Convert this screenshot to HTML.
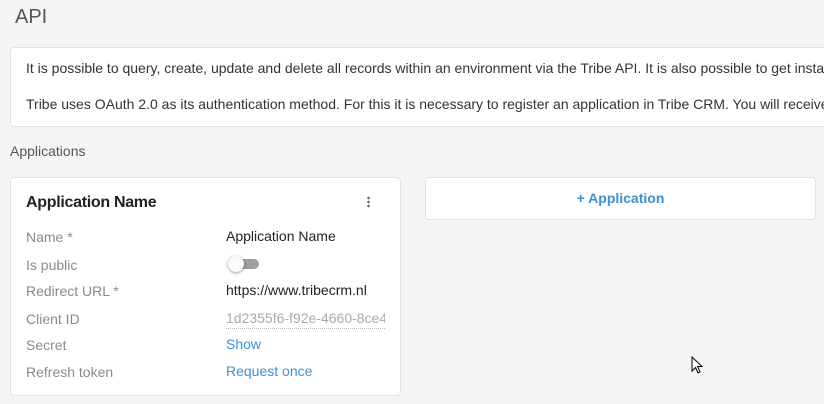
<!DOCTYPE html>
<html><head><style>
body{margin:0;width:824px;height:404px;background:#f5f5f5;font-family:"Liberation Sans",sans-serif;position:relative;overflow:hidden}
.a{position:absolute;white-space:nowrap}
.lbl{color:#8a8a8a;font-size:14px}
.val{color:#222;font-size:14px}
.link{color:#3d8fd6;font-size:14px}
</style></head><body>
<div class="a" style="left:15px;top:6px;font-size:20px;color:#555">API</div>
<div class="a" style="left:10px;top:47px;width:830px;height:78px;background:#fff;border:1px solid #e3e3e3;border-radius:4px"></div>
<div class="a" style="left:26px;top:60px;font-size:14px;color:#333">It is possible to query, create, update and delete all records within an environment via the Tribe API. It is also possible to get instant</div>
<div class="a" style="left:26px;top:96px;font-size:14px;color:#333">Tribe uses OAuth 2.0 as its authentication method. For this it is necessary to register an application in Tribe CRM. You will receive</div>
<div class="a" style="left:10px;top:143px;font-size:14px;color:#555">Applications</div>
<div class="a" style="left:10px;top:177px;width:389px;height:217px;background:#fff;border:1px solid #e3e3e3;border-radius:4px"></div>
<div class="a" style="left:26px;top:194px;font-size:16px;color:#222;font-weight:bold;letter-spacing:-0.3px">Application Name</div>
<div class="a" style="left:367px;top:196px;width:3px;height:12px;background:radial-gradient(circle,#666 1.2px,transparent 1.4px) 0 0/3px 4px"></div>
<div class="a lbl" style="left:26px;top:229px">Name *</div>
<div class="a lbl" style="left:26px;top:257px">Is public</div>
<div class="a lbl" style="left:26px;top:283px">Redirect URL *</div>
<div class="a lbl" style="left:26px;top:311px">Client ID</div>
<div class="a lbl" style="left:26px;top:337px">Secret</div>
<div class="a lbl" style="left:26px;top:364px">Refresh token</div>
<div class="a val" style="left:226px;top:228px">Application Name</div>
<div class="a" style="left:232px;top:259px;width:27px;height:10px;border-radius:5px;background:#9e9e9e"></div>
<div class="a" style="left:228px;top:256px;width:16px;height:16px;border-radius:50%;background:#fafafa;box-shadow:0 1px 3px rgba(0,0,0,.4)"></div>
<div class="a val" style="left:226px;top:282px">https://www.tribecrm.nl</div>
<div class="a" style="left:226px;top:310px;width:159px;overflow:hidden;font-size:14px;color:#aaa;border-bottom:1px dotted #bbb;padding-bottom:2px">1d2355f6-f92e-4660-8ce4</div>
<div class="a link" style="left:226px;top:336px">Show</div>
<div class="a link" style="left:226px;top:363px">Request once</div>
<div class="a" style="left:425px;top:177px;width:389px;height:41px;background:#fff;border:1px solid #e3e3e3;border-radius:4px;text-align:center;line-height:41px;color:#3d8fd6;font-size:14px;font-weight:bold">+ Application</div>
<svg class="a" style="left:691px;top:356px" width="14" height="20" viewBox="0 0 14 20"><path d="M1 1 L1 15 L4.5 11.5 L7 17 L9 16 L6.5 10.5 L11 10.5 Z" fill="#fff" stroke="#000" stroke-width="1"/></svg>
</body></html>
